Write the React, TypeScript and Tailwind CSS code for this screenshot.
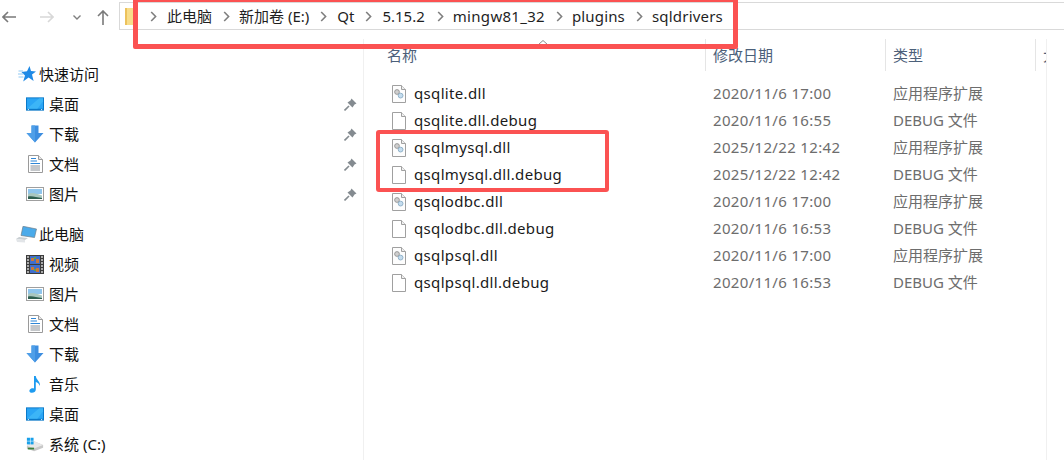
import React from "react";

const font = { fontFamily: '"Noto Sans","Noto Sans CJK SC",sans-serif' };

const Chev = () => (
  <svg width="7" height="11" viewBox="0 0 7 11" className="shrink-0">
    <path d="M1.2 1 L5.6 5.5 L1.2 10" fill="none" stroke="#7f7f7f" strokeWidth="1.6" />
  </svg>
);

const Desktop = () => (
  <svg width="19" height="14" viewBox="0 0 19 14">
    <rect x="0" y="0" width="19" height="14" fill="#0a78c8" />
    <path d="M1 1H18V12H1Z" fill="#2aa5f5" />
    <path d="M1 12 L12 12 L18 4 L18 1 L14 1 Z" fill="#45bcf8" opacity=".7" />
    <rect x="16" y="12.4" width="1" height="1" fill="#fff" />
    <rect x="2" y="12.4" width="1" height="1" fill="#fff" />
  </svg>
);
const Down = () => (
  <svg width="18" height="18" viewBox="0 0 18 18">
    <path d="M5.5 0.5H12.5V8H17.5L9 17.5L0.5 8H5.5Z" fill="#3d8ee0" />
    <path d="M5.5 0.5H9V17.5L0.5 8H5.5Z" fill="#4f9fe8" />
  </svg>
);
const Doc = () => (
  <svg width="15" height="18" viewBox="0 0 15 18">
    <path d="M0.5 0.5H10.5L14.5 4.5V17.5H0.5Z" fill="#fff" stroke="#9a9a9a" />
    <path d="M10.5 0.5V4.5H14.5" fill="#e8e8e8" stroke="#9a9a9a" />
    <path d="M3 3.5H8M2.5 6H9M2.5 8.5H12" stroke="#2f86d6" strokeWidth="1" />
    <path d="M2.5 11H12M2.5 13H12M2.5 15H12" stroke="#8a8f96" strokeWidth="1" />
  </svg>
);
const Pic = () => (
  <svg width="18" height="14" viewBox="0 0 18 14">
    <rect x="0.5" y="0.5" width="17" height="13" fill="#fff" stroke="#9f9f9f" />
    <rect x="2" y="2" width="14" height="5" fill="#8fc5ec" />
    <path d="M2 7 C6 5 10 6.5 16 8.5V12H2Z" fill="#a9c7bf" />
    <path d="M2 9.5 C6 8.5 10 10 16 11V12H2Z" fill="#2f5f50" />
  </svg>
);
const Star = () => (
  <svg width="18" height="16" viewBox="0 0 18 16">
    <path d="M11.5 0 L13 5 L18 5.4 L14 8.6 L15.6 15 L10.6 11.6 L5.2 15.4 L7 9.4 L3.4 6 L9 5.2 Z" fill="#1f8ae6" />
    <path d="M0.5 5H5M0 8H5.5M0.5 11H5.5" stroke="#8fc8f2" strokeWidth="1" />
  </svg>
);
const Computer = () => (
  <svg width="21" height="17" viewBox="0 0 21 17">
    <path d="M7 0.3 L20.5 3 L18.5 11.5 L5 9.5 Z" fill="#4aaaea" stroke="#6f7f8c" strokeWidth=".7" />
    <path d="M3 11 L12 12 L9 14 L0 13 Z" fill="#c9cfd3" />
    <path d="M0 13 L9 14 L9 16.5 L1 16 Z" fill="#e2e5e8" />
  </svg>
);
const Video = () => (
  <svg width="18" height="19" viewBox="0 0 18 19">
    <rect width="18" height="19" fill="#3c3c3c" />
    <path d="M1 2h2M1 5h2M1 8h2M1 11h2M1 14h2M1 17h2M15 2h2M15 5h2M15 8h2M15 11h2M15 14h2M15 17h2" stroke="#d0d0d0" strokeWidth="1.3" />
    <rect x="4" y="1" width="10" height="8" fill="#3f6fd0" />
    <rect x="4" y="10" width="10" height="8" fill="#3f6fd0" />
    <path d="M5 3h3v3H5zM10 4h3v4h-3zM5 12h3v3H5zM10 13h3v4h-3z" fill="#c8783c" />
    <path d="M8 2h2v2H8zM8 14h2v2H8z" fill="#5aa84a" />
  </svg>
);
const Music = () => (
  <svg width="12" height="17" viewBox="0 0 12 17">
    <path d="M5 0 H6.8 C7 4 11.5 5 11 10 C10 7.5 8.5 6.5 6.8 6 V13.5 C6.8 15.8 4.5 17 2.5 16.8 C0.6 16.6 0 15.2 0.6 14 C1.4 12.5 3.5 12 5 12.6 Z" fill="#1d9bf0" />
  </svg>
);
const Drive = () => (
  <svg width="20" height="15" viewBox="0 0 20 15">
    <path d="M9 4 L19 8 V11 L9 15 L1 12 V9 Z" fill="#c8c8c8" />
    <path d="M1 9 L9 12 L19 8 L9 4 Z" fill="#e8e8e8" />
    <path d="M2 11h7v2H2z" fill="#3d7f3d" />
    <rect x="1" y="0" width="3.4" height="3.4" fill="#18a0ea" />
    <rect x="5" y="0" width="3.4" height="3.4" fill="#18a0ea" />
    <rect x="1" y="4" width="3.4" height="3.4" fill="#18a0ea" />
    <rect x="5" y="4" width="3.4" height="3.4" fill="#18a0ea" />
  </svg>
);
const Pin = () => (
  <svg width="13" height="13" viewBox="0 0 13 13">
    <path d="M7.5 0.5 L12.5 5.5 L10.5 6.5 L8.5 9.5 L3.5 4.5 L6.5 2.5 Z" fill="#848b90" />
    <path d="M5 8 L0.5 12.5" stroke="#848b90" strokeWidth="1.6" />
  </svg>
);
const DllIcon = () => (
  <svg width="14" height="18" viewBox="0 0 14 18">
    <path d="M0.5 0.5H9.5L13.5 4.5V17.5H0.5Z" fill="#fdfdfd" stroke="#a0a0a0" />
    <path d="M9.5 0.5V4.5H13.5" fill="#eee" stroke="#a0a0a0" />
    <circle cx="5" cy="7" r="2.4" fill="#cfcfcf" stroke="#8a8a8a" strokeWidth=".8" />
    <circle cx="8.6" cy="10.6" r="2.4" fill="#c4dcee" stroke="#7fa4bf" strokeWidth=".8" />
  </svg>
);
const FileIcon = () => (
  <svg width="14" height="18" viewBox="0 0 14 18">
    <path d="M0.5 0.5H9.5L13.5 4.5V17.5H0.5Z" fill="#fff" stroke="#a0a0a0" />
    <path d="M9.5 0.5V4.5H13.5" fill="#f0f0f0" stroke="#a0a0a0" />
  </svg>
);

const NavItem = ({ icon, label, pin }: { icon: React.ReactNode; label: string; pin?: boolean }) => (
  <div className="flex h-[30px] items-center pl-[26px] pr-[6px] text-[15px] text-[#111111]">
    <span className="flex w-[18px] justify-center">{icon}</span>
    <span className="ml-[6px] flex-1 -translate-x-px">{label}</span>
    {pin && <Pin />}
  </div>
);

const NavHead = ({ icon, label }: { icon: React.ReactNode; label: string }) => (
  <div className="flex h-[30px] items-center pl-[16px] text-[15px] text-[#111111]">
    <span className="flex w-[21px] justify-center">{icon}</span>
    <span className="ml-[3px] -translate-x-px">{label}</span>
  </div>
);

const files: [string, string, string, boolean][] = [
  ["qsqlite.dll", "2020/11/6 17:00", "应用程序扩展", true],
  ["qsqlite.dll.debug", "2020/11/6 16:55", "DEBUG 文件", false],
  ["qsqlmysql.dll", "2025/12/22 12:42", "应用程序扩展", true],
  ["qsqlmysql.dll.debug", "2025/12/22 12:42", "DEBUG 文件", false],
  ["qsqlodbc.dll", "2020/11/6 17:00", "应用程序扩展", true],
  ["qsqlodbc.dll.debug", "2020/11/6 16:53", "DEBUG 文件", false],
  ["qsqlpsql.dll", "2020/11/6 17:00", "应用程序扩展", true],
  ["qsqlpsql.dll.debug", "2020/11/6 16:53", "DEBUG 文件", false],
];

const crumbs: [string, string][] = [
  ["此电脑", "ml-[10px] mr-[11px]"],
  ["新加卷 (E:)", "ml-[9px] mr-[11px]"],
  ["Qt", "ml-[10px] mr-[11px]"],
  ["5.15.2", "ml-[10px] mr-[12px]"],
  ["mingw81_32", "ml-[9px] mr-[11px] tracking-[0.3px]"],
  ["plugins", "ml-[9px] mr-[11px] tracking-[0.15px]"],
  ["sqldrivers", "ml-[9px] tracking-[0.2px]"],
];

export default function App() {
  return (
    <div className="relative h-[460px] w-[1064px] overflow-hidden bg-white" style={font}>
      <div className="flex h-[39px]">
        <div className="flex h-[34px] w-[119px] items-center pl-[2px]">
          <svg width="14" height="12" viewBox="0 0 14 12"><path d="M6 1 L1 6 L6 11 M1 6 H14" fill="none" stroke="#7a7a7a" strokeWidth="1.6" /></svg>
          <svg width="14" height="12" viewBox="0 0 14 12" className="ml-[24px]"><path d="M8 1 L13 6 L8 11 M0 6 H13" fill="none" stroke="#d8d8d8" strokeWidth="1.6" /></svg>
          <svg width="8" height="5" viewBox="0 0 8 5" className="ml-[19px]"><path d="M0.5 0.5 L4 4 L7.5 0.5" fill="none" stroke="#7f7f7f" strokeWidth="1.4" /></svg>
          <svg width="12" height="15" viewBox="0 0 12 15" className="ml-[16px]"><path d="M1 6 L6 1 L11 6 M6 1 V15" fill="none" stroke="#7a7a7a" strokeWidth="1.6" /></svg>
        </div>
        <div className="mt-[2px] flex h-[28px] flex-1 items-center border border-r-0 border-[#d9d9d9] pl-[5px]">
          <svg width="8" height="17" viewBox="0 0 8 17" className="shrink-0">
            <rect width="8" height="17" fill="#f8dd8a" />
            <rect width="2" height="17" fill="#ecc25c" />
          </svg>
          <span className="ml-[17px]"><Chev /></span>
          <div className="flex items-center text-[15px] text-[#1f1f1f]">
            {crumbs.map(([c, m], i) => (
              <React.Fragment key={c}>
                <span className={m}>{c}</span>
                {i < crumbs.length - 1 && <Chev />}
              </React.Fragment>
            ))}
          </div>
        </div>
      </div>
      <div className="flex h-[421px]">
        <div className="w-[364px] shrink-0 overflow-hidden border-r border-[#f0f0f0] pt-[20px]">
          <NavHead icon={<Star />} label="快速访问" />
          <NavItem icon={<Desktop />} label="桌面" pin />
          <NavItem icon={<Down />} label="下载" pin />
          <NavItem icon={<Doc />} label="文档" pin />
          <NavItem icon={<Pic />} label="图片" pin />
          <div className="h-[10px]" />
          <NavHead icon={<Computer />} label="此电脑" />
          <NavItem icon={<Video />} label="视频" />
          <NavItem icon={<Pic />} label="图片" />
          <NavItem icon={<Doc />} label="文档" />
          <NavItem icon={<Down />} label="下载" />
          <NavItem icon={<Music />} label="音乐" />
          <NavItem icon={<Desktop />} label="桌面" />
          <NavItem icon={<Drive />} label="系统 (C:)" />
        </div>
        <div className="w-[683px] shrink-0 border-r border-[#f0f0f0]">
          <div className="relative flex h-[32px] text-[15px] text-[#4c607a]">
            <div className="h-full w-[342px] border-r border-[#e5e5e5] pl-[23px] pt-[3px] leading-[26px]">名称</div>
            <div className="h-full w-[180px] border-r border-[#e5e5e5] pl-[7px] pt-[3px] leading-[26px]">修改日期</div>
            <div className="h-full w-[150px] border-r border-[#e5e5e5] pl-[7px] pt-[3px] leading-[26px]">类型</div>
            <div className="h-full w-[10px] overflow-hidden pl-[7px] pt-[3px] leading-[26px]">大</div>
            <svg width="10" height="5" viewBox="0 0 10 5" className="absolute left-[174px] top-[1px]"><path d="M0.5 4.5 L5 0.5 L9.5 4.5" fill="none" stroke="#8a8a8a" /></svg>
          </div>
          <div className="pt-[9px]">
            {files.map(([n, d, t, dll]) => (
              <div key={n} className="flex h-[27px] items-center text-[15px]">
                <div className="flex w-[342px] items-center pl-[28px] text-[#1a1a1a]">
                  {dll ? <DllIcon /> : <FileIcon />}
                  <span className="ml-[8px] tracking-[0.33px]">{n}</span>
                </div>
                <div className="w-[180px] pl-[7px] tracking-[0.33px] text-[#6d6d6d]">{d}</div>
                <div className="pl-[7px] text-[#6d6d6d]">{t}</div>
              </div>
            ))}
          </div>
        </div>
      </div>
      <div className="absolute left-[133px] top-[-3px] h-[52px] w-[605px] rounded-[2px] border-[5px] border-[#fb5252]" />
      <div className="absolute left-[376px] top-[130px] h-[62px] w-[233px] rounded-[3px] border-[4px] border-[#fb5252]" />
    </div>
  );
}
